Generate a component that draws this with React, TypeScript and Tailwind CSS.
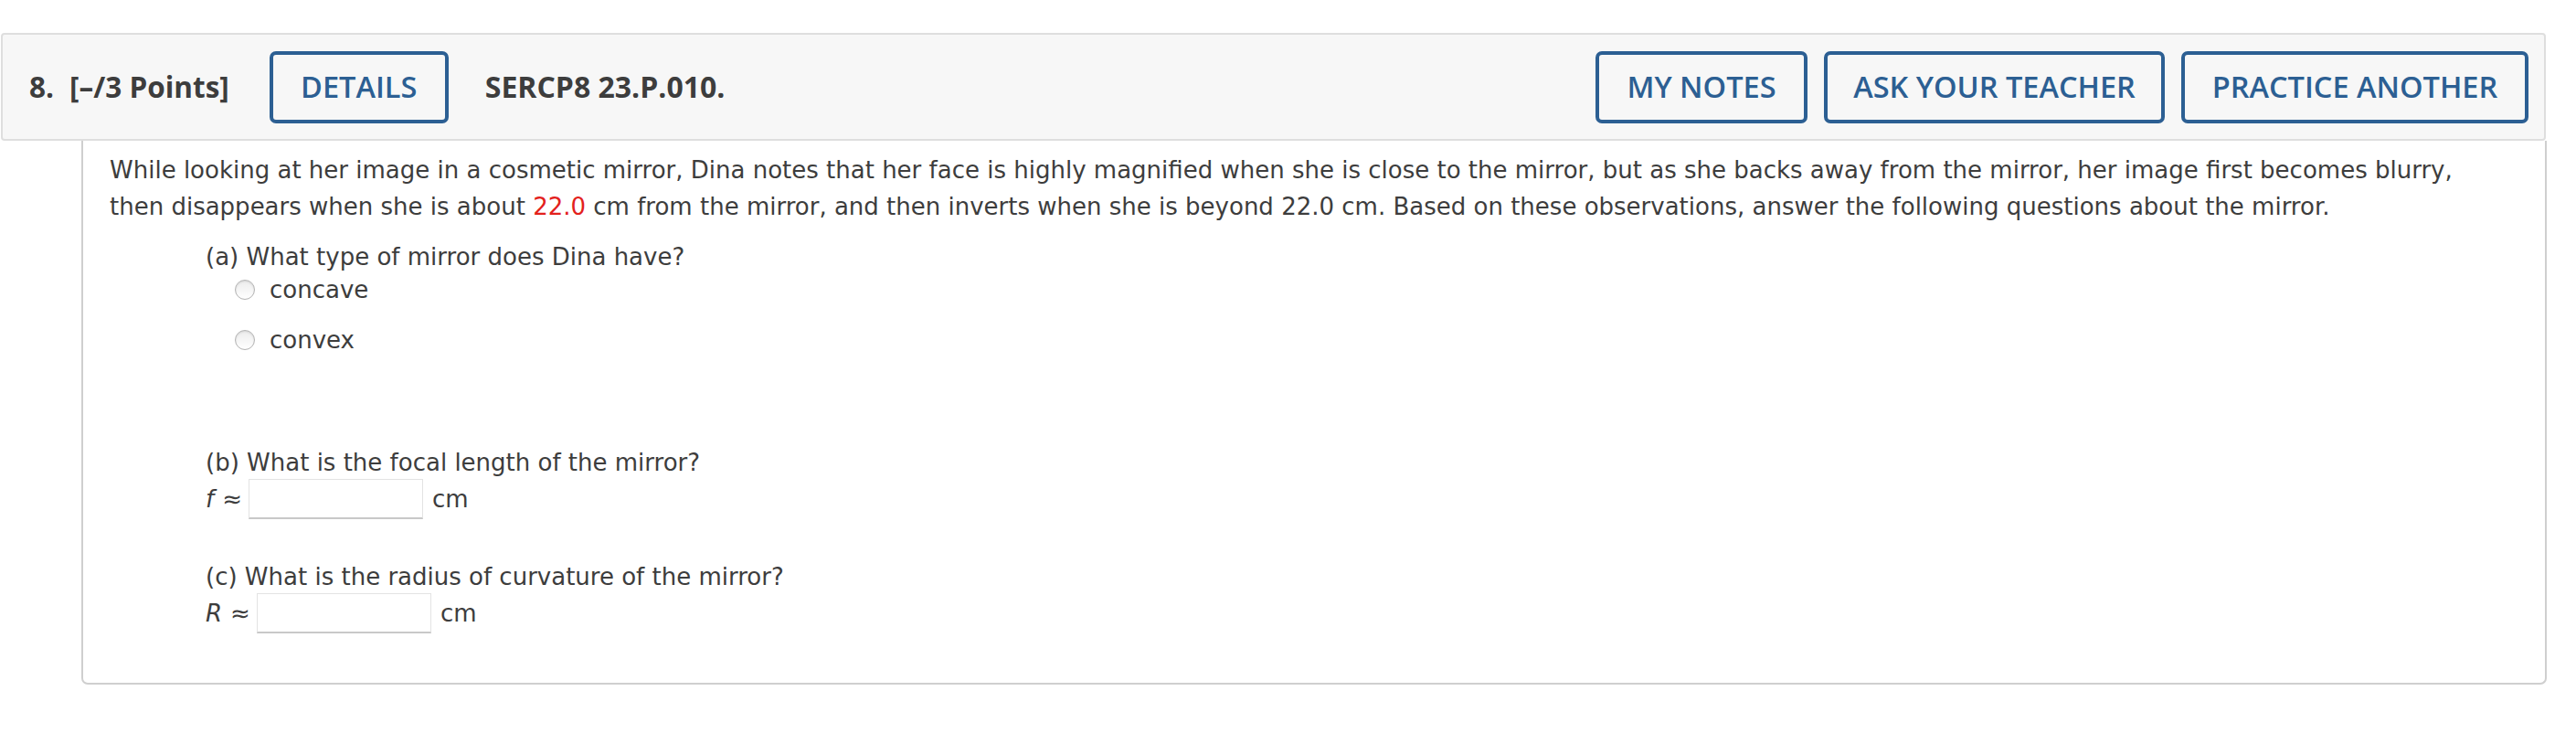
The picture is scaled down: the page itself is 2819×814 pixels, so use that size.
import React from 'react';

const headFont = { fontFamily: '"Open Sans", "Liberation Sans", sans-serif' };
const bodyFont = { fontFamily: 'Verdana, "DejaVu Sans", sans-serif' };

const OutlineButton = ({ label, width }: { label: string; width: string }) => (
  <button
    type="button"
    className={`${width} h-[79px] flex items-center justify-center rounded-[7px] border-[4px] border-[#2c5f93] bg-[#f7f7f7] text-[32.5px] font-semibold text-[#2c5f93]`}
    style={headFont}
  >
    {label}
  </button>
);

const Radio = ({ label }: { label: string }) => (
  <label className="flex items-center h-[55px] gap-[16px]">
    <span className="w-[22px] h-[22px] rounded-full border border-[#b3b3b3] bg-gradient-to-b from-[#ececec] to-white shadow-[inset_0_1px_2px_rgba(0,0,0,0.1)]" />
    <span>{label}</span>
  </label>
);

const AnswerField = ({ symbol, inputWidth }: { symbol: string; inputWidth: string }) => (
  <div className="flex items-center h-[40px]">
    <span className="italic mr-[9px]">{symbol}</span>
    <span className="mr-[7px]">≈</span>
    <span className={`${inputWidth} h-[44px] shrink-0 border border-[#e3e3e3] border-b-[2px] border-b-[#c8c8c8] bg-white`} />
    <span className="ml-[10px]">cm</span>
  </div>
);

const App = () => {
  return (
    <div className="min-h-screen bg-white pt-[36px] pl-[1px]">
      {/* question header */}
      <div
        className="w-[2785px] h-[118px] flex items-center border-2 border-[#dedede] rounded-[4px] bg-[#f7f7f7] pl-[29px] pr-[17px]"
        style={headFont}
      >
        <span className="text-[31.5px] font-bold text-[#3d3d3d]">8.</span>
        <span className="ml-[17px] text-[31.5px] font-bold text-[#3d3d3d]">[–/3 Points]</span>
        <div className="ml-[44px]">
          <OutlineButton label="DETAILS" width="w-[196px]" />
        </div>
        <span className="ml-[40px] text-[32px] font-bold text-[#3d3d3d]">SERCP8 23.P.010.</span>
        <div className="ml-auto flex gap-[18px]">
          <OutlineButton label="MY NOTES" width="w-[232px]" />
          <OutlineButton label="ASK YOUR TEACHER" width="w-[373px]" />
          <OutlineButton label="PRACTICE ANOTHER" width="w-[380px]" />
        </div>
      </div>

      {/* question body */}
      <div
        className="ml-[88px] w-[2698px] h-[595px] border-2 border-t-0 border-[#cfcfcf] rounded-b-[7px] pl-[29px] pt-[12px] text-[26px] leading-[40px] text-[#3d3d3d]"
        style={bodyFont}
      >
        <p className="whitespace-nowrap">
          While looking at her image in a cosmetic mirror, Dina notes that her face is highly magnified when she is
          close to the mirror, but as she backs away from the mirror, her image first becomes blurry,
        </p>
        <p className="whitespace-nowrap">
          then disappears when she is about <span className="text-[#e3211c]">22.0</span> cm from the mirror, and then
          inverts when she is beyond 22.0 cm. Based on these observations, answer the following questions about the
          mirror.
        </p>

        <div className="pl-[105px] mt-[15px]">
          <p>(a) What type of mirror does Dina have?</p>
          <div className="pl-[32px] -mt-[12px]">
            <Radio label="concave" />
            <Radio label="convex" />
          </div>

          <p className="mt-[87px]">(b) What is the focal length of the mirror?</p>
          <AnswerField symbol="f" inputWidth="w-[191px]" />

          <p className="mt-[45px]">(c) What is the radius of curvature of the mirror?</p>
          <AnswerField symbol="R" inputWidth="w-[191px]" />
        </div>
      </div>
    </div>
  );
};

export default App;
